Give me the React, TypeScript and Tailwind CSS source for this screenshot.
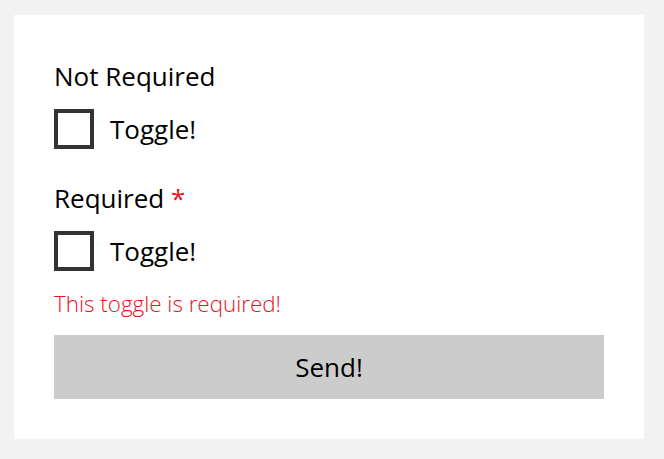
import { useState } from 'react'

function Toggle({ checked, onChange }: { checked: boolean; onChange: () => void }) {
  return (
    <label className="mt-3 flex h-10 cursor-pointer items-center gap-4">
      <span className="flex h-10 w-10 items-center justify-center border-4 border-[#333333] bg-white">
        {checked && (
          <svg viewBox="0 0 24 24" className="h-6 w-6" fill="none" stroke="#333333" strokeWidth={3}>
            <path d="M4 12l5 5L20 6" />
          </svg>
        )}
      </span>
      <input type="checkbox" className="hidden" checked={checked} onChange={onChange} />
      <span className="text-[26px] leading-10 text-black">Toggle!</span>
    </label>
  )
}

export default function App() {
  const [a, setA] = useState(false)
  const [b, setB] = useState(false)

  return (
    <div
      className="min-h-[459px] w-[664px] bg-[#f2f2f2] pl-[14px] pt-[15px]"
      style={{ fontFamily: '"Open Sans", "Noto Sans", sans-serif' }}
    >
      <form className="w-[630px] bg-white px-10 pb-10 pt-10" onSubmit={(e) => e.preventDefault()}>
        <div>
          <p className="text-[26px] leading-[42px] text-black">Not Required</p>
          <Toggle checked={a} onChange={() => setA(!a)} />
        </div>

        <div className="mt-7">
          <p className="text-[26px] leading-[42px] text-black">
            Required <span className="text-[#e81123]">*</span>
          </p>
          <Toggle checked={b} onChange={() => setB(!b)} />
        </div>

        {!b && (
          <p className="mt-[17px] text-[22.4px] font-light leading-8 text-[#e81123]">This toggle is required!</p>
        )}

        <button
          type="submit"
          className="mt-[15px] flex h-16 w-full items-center justify-center bg-[#cccccc] text-[26px] text-black"
        >
          Send!
        </button>
      </form>
    </div>
  )
}
